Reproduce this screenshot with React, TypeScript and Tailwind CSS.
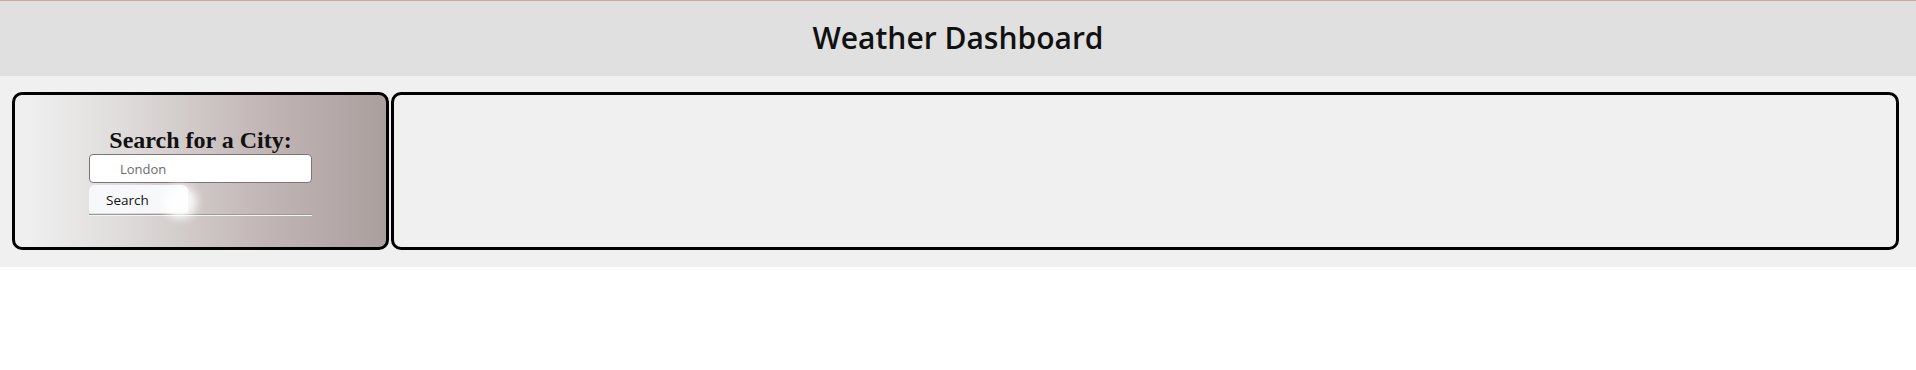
export default function App() {
  return (
    <div className="min-h-[370px] bg-white">
      {/* Header */}
      <header className="h-[76px] border-t border-[#c9aaa2] bg-[#e0e0e0] flex items-center justify-center">
        <h1 className="text-[30px] font-semibold text-[#111] font-['Open_Sans',sans-serif] -mt-[3px]">
          Weather Dashboard
        </h1>
      </header>

      {/* Main */}
      <main className="bg-[#f0f0f0] pt-[16px] pb-[17px] pl-[12px] pr-[17px] flex gap-[2px]">
        <section className="w-[377px] h-[158px] shrink-0 rounded-[10px] border-[3px] border-black bg-[linear-gradient(to_right,#efefef_4%,#dedbda_30%,#c3b8b7_65%,#ab9f9e)] flex flex-col items-center justify-center">
          <h2 className="text-[24px] leading-[27px] font-bold text-[#111] font-['Liberation_Serif',serif] mt-[1px]">
            Search for a City:
          </h2>
          <form className="w-[223px] flex flex-col" onSubmit={(e) => e.preventDefault()}>
            <input
              type="text"
              placeholder="London"
              className="h-[29px] w-full rounded-[4px] border border-[#777] bg-white pl-[30px] text-[13px] font-['Open_Sans',sans-serif] placeholder-[#6b6b6b] focus:outline-none"
            />
            <div className="relative mt-[2px] h-[28px] w-[99px]">
              <button
                type="submit"
                className="h-full w-full rounded-t-[6px] rounded-b-[3px] bg-[#f7f8fa] pl-[17px] pt-[2px] text-left text-[13.5px] text-[#111] font-['Open_Sans',sans-serif]"
              >
                Search
              </button>
              <div className="absolute left-[74px] top-[0px] h-[34px] w-[34px] rounded-full bg-white/85 blur-[4px]" />
            </div>
            <div className="mt-[1px] h-[2px] border-t border-b border-t-[#999] border-b-[#f4f4f4]" />
          </form>
        </section>

        <section className="flex-1 h-[158px] rounded-[10px] border-[3px] border-black bg-[#f0f0f0]" />
      </main>
    </div>
  )
}
